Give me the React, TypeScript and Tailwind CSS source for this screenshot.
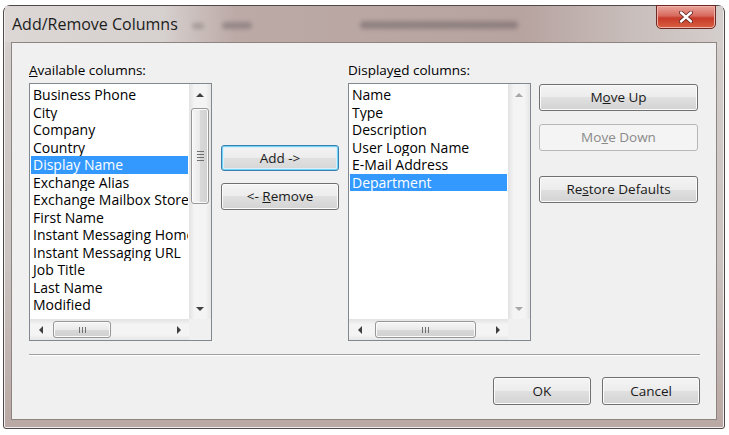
import React from 'react'

const available = [
  'Business Phone',
  'City',
  'Company',
  'Country',
  'Display Name',
  'Exchange Alias',
  'Exchange Mailbox Store',
  'First Name',
  'Instant Messaging Home Page',
  'Instant Messaging URL',
  'Job Title',
  'Last Name',
  'Modified',
]

const displayed = ['Name', 'Type', 'Description', 'User Logon Name', 'E-Mail Address', 'Department']

const Arrow: React.FC<{ dir: 'up' | 'down' | 'left' | 'right'; disabled?: boolean }> = ({ dir, disabled }) => {
  const fill = disabled ? '#a8a8a8' : '#404040'
  const pts = {
    up: '0,5 4,1 8,5',
    down: '0,1 4,5 8,1',
    left: '5,0 1,4 5,8',
    right: '1,0 5,4 1,8',
  }[dir]
  const vertical = dir === 'up' || dir === 'down'
  return (
    <svg width={vertical ? 8 : 6} height={vertical ? 6 : 8} viewBox={vertical ? '0 0 8 6' : '0 0 6 8'}>
      <polygon points={pts} fill={fill} />
    </svg>
  )
}

const VScroll: React.FC<{ thumb?: boolean }> = ({ thumb }) => (
  <div className="w-[22px] flex flex-col bg-[linear-gradient(90deg,#e2e2e2,#f4f4f4_25%,#f4f4f4_75%,#e6e6e6)]">
    <div className="h-[21px] flex items-center justify-center">
      <Arrow dir="up" disabled={!thumb} />
    </div>
    {thumb && (
      <div className="mx-[2px] mt-[3px] h-[96px] rounded-[3px] border border-[#979797] bg-[linear-gradient(90deg,#f6f6f6,#e9e9e9_50%,#d9d9d9_50%,#d0d0d0)] shadow-[inset_0_0_0_1px_#fbfbfb] flex flex-col items-center justify-center gap-[2px]">
        <div className="w-[7px] h-px bg-[#6f6f6f]" />
        <div className="w-[7px] h-px bg-[#6f6f6f]" />
        <div className="w-[7px] h-px bg-[#6f6f6f]" />
        <div className="w-[7px] h-px bg-[#6f6f6f]" />
      </div>
    )}
    <div className="flex-1" />
    <div className="h-[21px] flex items-center justify-center">
      <Arrow dir="down" disabled={!thumb} />
    </div>
  </div>
)

const HScroll: React.FC<{ gap: number; width: number }> = ({ gap, width }) => (
  <div className="flex-1 flex items-stretch bg-[linear-gradient(180deg,#e2e2e2,#f4f4f4_25%,#f4f4f4_75%,#e6e6e6)]">
    <div className="w-[21px] flex items-center justify-center">
      <Arrow dir="left" />
    </div>
    <div
      className="my-[2px] rounded-[3px] border border-[#979797] bg-[linear-gradient(180deg,#f6f6f6,#e9e9e9_50%,#d9d9d9_50%,#d0d0d0)] shadow-[inset_0_0_0_1px_#fbfbfb] flex items-center justify-center gap-[2px]"
      style={{ marginLeft: gap, width }}
    >
      <div className="w-px h-[6px] bg-[#6f6f6f]" />
      <div className="w-px h-[6px] bg-[#6f6f6f]" />
      <div className="w-px h-[6px] bg-[#6f6f6f]" />
    </div>
    <div className="flex-1" />
    <div className="w-[21px] flex items-center justify-center">
      <Arrow dir="right" />
    </div>
  </div>
)

const ListBox: React.FC<{
  items: string[]
  selected: string
  thumb?: boolean
  hGap: number
  hWidth: number
}> = ({ items, selected, thumb, hGap, hWidth }) => (
  <div className="w-[183px] h-[258px] border border-[#828790] bg-white flex flex-col">
    <div className="flex flex-1 min-h-0">
      <div className="flex-1 min-w-0 overflow-hidden pt-[2px] px-px">
        {items.map((it) => (
          <div
            key={it}
            className={`h-[17.5px] leading-[17.5px] pl-[2px] whitespace-nowrap overflow-hidden text-[14px] ${
              it === selected ? 'bg-[#3399ff] text-white' : 'text-black'
            }`}
          >
            {it}
          </div>
        ))}
      </div>
      <VScroll thumb={thumb} />
    </div>
    <div className="flex h-[21px]">
      <HScroll gap={hGap} width={hWidth} />
      <div className="w-[22px] bg-[#f0f0f0]" />
    </div>
  </div>
)

const Btn: React.FC<{
  children: React.ReactNode
  className?: string
  disabled?: boolean
  focused?: boolean
}> = ({ children, className = '', disabled, focused }) => (
  <div
    className={`flex items-center justify-center rounded-[3px] border text-[13.5px] whitespace-pre ${
      disabled
        ? 'border-[#b5b8ba] bg-[#f4f4f4] text-[#8a8a8a]'
        : focused
          ? 'border-[#3c7fb1] shadow-[inset_0_0_0_1px_#74d3f4,inset_0_0_0_2px_#d8f1fb] bg-[linear-gradient(180deg,#f4f4f4,#ececec_50%,#e0e0e0_50%,#d6d6d6)] text-[#1a1a1a]'
          : 'border-[#707070] shadow-[inset_0_0_0_1px_#fbfbfb] bg-[linear-gradient(180deg,#f4f4f4,#ececec_50%,#e0e0e0_50%,#d3d3d3)] text-[#1a1a1a]'
    } ${className}`}
  >
    {children}
  </div>
)

export default function App() {
  return (
    <div className="w-[729px] h-[435px] bg-white overflow-hidden font-['Open_Sans',sans-serif]">
      {/* Window frame */}
      <div className="ml-[3px] mt-[5px] w-[722px] h-[424px] rounded-t-[7px] rounded-b-[3px] border border-[#4f4a49] bg-[linear-gradient(180deg,#dedad8_0%,#d2cccb_12%,#cbc4c1_60%,#b9a8a3_100%)] shadow-[inset_0_0_0_1px_#f2eeed] flex flex-col px-[7px] pb-[8px]">
        {/* Title bar */}
        <div className="h-[36px] -mx-[6px] px-[6px] bg-[linear-gradient(90deg,#dcd7d5_0%,#d6d0ce_22%,#bcaaa7_32%,#b7a3a0_72%,#c9bfbc_88%,#d4cecc_100%)] flex items-start">
          <div className="mt-[8px] ml-[1px] text-[16px] leading-[20px] text-[#1c1c1c]">Add/Remove Columns</div>
          <div className="mt-[17px] ml-[14px] w-[12px] h-[6px] rounded bg-[#8f8482] blur-[2px] opacity-60" />
          <div className="mt-[16px] ml-[18px] w-[30px] h-[7px] rounded bg-[#85797a] blur-[2px] opacity-70" />
          <div className="mt-[15px] ml-[108px] w-[158px] h-[8px] rounded bg-[#7f7372] blur-[2px] opacity-70" />
          <div className="-mt-px ml-auto mr-px w-[60px] h-[24px] rounded-b-[5px] border border-[#6e2a22] bg-[linear-gradient(180deg,#eaa59c_0%,#d7685c_45%,#c73a2a_55%,#d9603f_100%)] shadow-[inset_0_0_0_1px_#f0b2aa] flex items-center justify-center">
            <svg width="14" height="12" viewBox="0 0 14 12">
              <path d="M2 1.5 L12 10.5 M12 1.5 L2 10.5" stroke="#5a1e18" strokeWidth="4" strokeLinecap="round" />
              <path d="M2 1.5 L12 10.5 M12 1.5 L2 10.5" stroke="#ffffff" strokeWidth="2.4" strokeLinecap="round" />
            </svg>
          </div>
        </div>

        {/* Client area */}
        <div className="flex-1 border border-[#8e8583] bg-[#f0f0f0] text-black flex flex-col pl-[17px] pt-[19px]">
          <div className="flex items-start">
            {/* Available */}
            <div className="w-[183px] flex flex-col">
              <div className="h-[21px] text-[13.5px] leading-[17px]">
                <span className="underline">A</span>vailable columns:
              </div>
              <ListBox items={available} selected="Display Name" thumb hGap={2} hWidth={58} />
            </div>

            {/* Add / Remove */}
            <div className="ml-[9px] pt-[83px] w-[118px] flex flex-col gap-[12px]">
              <Btn focused className="h-[26px]">Add -&gt;</Btn>
              <Btn className="h-[27px]">
                {'<- '}<span className="underline">R</span>emove
              </Btn>
            </div>

            {/* Displayed */}
            <div className="ml-[9px] w-[184px] flex flex-col">
              <div className="h-[21px] text-[13.5px] leading-[17px]">
                Display<span className="underline">e</span>d columns:
              </div>
              <ListBox items={displayed} selected="Department" hGap={5} hWidth={101} />
            </div>

            {/* Move buttons */}
            <div className="ml-[7px] pt-[22px] w-[159px] flex flex-col">
              <Btn className="h-[27px]">
                M<span className="underline">o</span>ve Up
              </Btn>
              <Btn disabled className="h-[27px] mt-[13px]">
                Mo<span className="underline">v</span>e Down
              </Btn>
              <Btn className="h-[27px] mt-[25px]">
                Re<span className="underline">s</span>tore Defaults
              </Btn>
            </div>
          </div>

          {/* Separator */}
          <div className="mt-[13px] w-[671px] h-[2px] border-t border-[#a0a0a0] border-b border-b-white" />

          {/* OK / Cancel */}
          <div className="mt-[21px] w-[671px] flex justify-end gap-[11px]">
            <Btn className="w-[98px] h-[28px]">OK</Btn>
            <Btn className="w-[98px] h-[28px]">Cancel</Btn>
          </div>
        </div>
      </div>
    </div>
  )
}
